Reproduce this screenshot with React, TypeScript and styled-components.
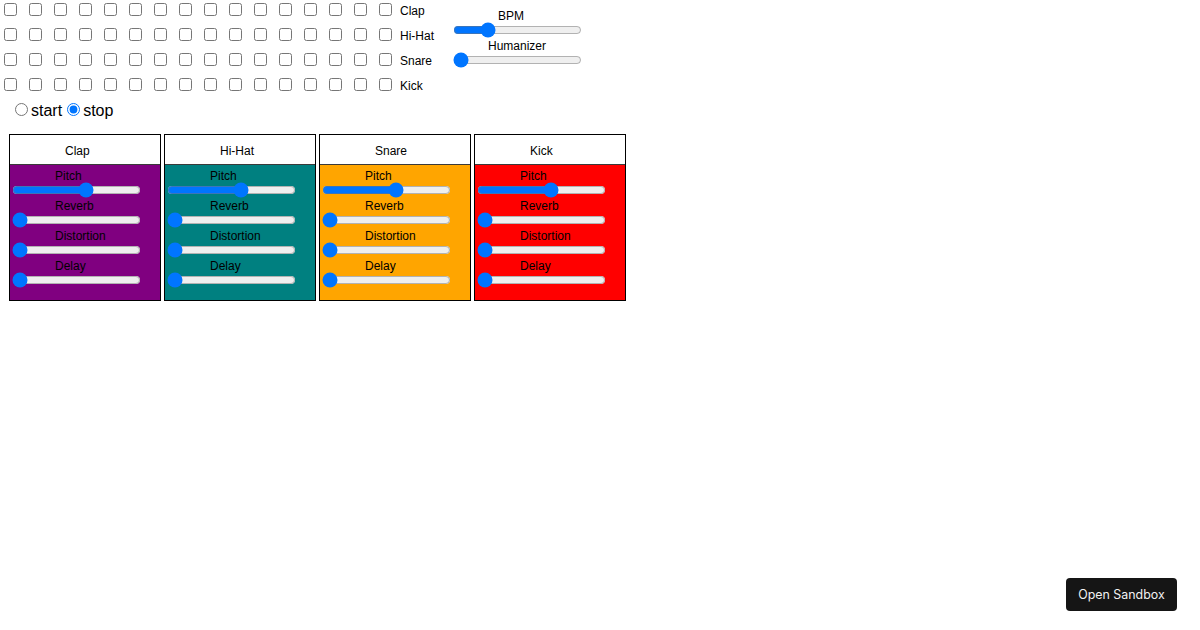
import React from "react";
import styled, { createGlobalStyle } from "styled-components";

const Global = createGlobalStyle`
  html, body {
    margin: 0;
    padding: 0;
    background: #ffffff;
    color: #000000;
    font-family: "Liberation Sans", Arial, sans-serif;
  }
`;

const Page = styled.div`
  display: flex;
  flex-direction: column;
`;

const Top = styled.div`
  display: flex;
  align-items: flex-start;
`;

const Sequencer = styled.div`
  display: flex;
  flex-direction: column;
`;

const SeqRow = styled.div`
  display: flex;
  align-items: flex-start;
  gap: 5px;
  height: 25px;
`;

const Step = styled.input.attrs({ type: "checkbox" })`
  width: 13px;
  height: 13px;
  margin: 3px 3px 3px 4px;
  flex: none;
`;

const TrackName = styled.span`
  margin-top: 4px;
  font-size: 12px;
  line-height: 14px;
`;

const Globals = styled.div`
  display: flex;
  flex-direction: column;
  margin-left: 17px;
  padding-top: 8px;
`;

const ControlLabel = styled.div<{ $indent: number }>`
  font-size: 12px;
  line-height: 12px;
  padding-top: 2px;
  padding-left: ${(p) => p.$indent}px;
  white-space: nowrap;
`;

const Slider = styled.input.attrs({ type: "range" })`
  display: block;
  width: 129px;
  height: 16px;
  margin: 0 2px;
`;

const Transport = styled.div`
  display: flex;
  align-items: flex-start;
  padding-left: 10px;
  margin-top: 2px;
  height: 18px;
  font-size: 16px;
  line-height: normal;
`;

const RadioLabel = styled.label`
  display: flex;
  align-items: flex-start;
`;

const Radio = styled.input.attrs({ type: "radio" })`
  width: 13px;
  height: 13px;
  margin: 1px 3px 0 5px;
  flex: none;
`;

const Cards = styled.div`
  display: flex;
  gap: 3px;
  padding-left: 9px;
  margin-top: 14px;
`;

const Card = styled.div`
  box-sizing: border-box;
  width: 152px;
  border: 1px solid #000000;
  display: flex;
  flex-direction: column;
`;

const CardHeader = styled.div`
  height: 26px;
  padding-top: 3px;
  line-height: 26px;
  font-size: 12px;
  padding-left: 55px;
  background: #ffffff;
  border-bottom: 1px solid #3a3a3a;
`;

const CardBody = styled.div<{ $bg: string }>`
  background: ${(p) => p.$bg};
  height: 135px;
  box-sizing: border-box;
  padding-top: 3px;
  display: flex;
  flex-direction: column;
`;

const SandboxButton = styled.button`
  position: fixed;
  right: 23px;
  bottom: 19px;
  width: 111px;
  height: 33px;
  border: none;
  border-radius: 4px;
  background: #151515;
  color: #f2f2f2;
  font-family: Inter, "Liberation Sans", sans-serif;
  font-size: 12.4px;
  padding: 0;
  cursor: pointer;
`;

const tracks = ["Clap", "Hi-Hat", "Snare", "Kick"];
const cardColors: Record<string, string> = {
  Clap: "#800080",
  "Hi-Hat": "#008080",
  Snare: "#ffa500",
  Kick: "#ff0000",
};
const effects = [
  { name: "Pitch", value: 58 },
  { name: "Reverb", value: 0 },
  { name: "Distortion", value: 0 },
  { name: "Delay", value: 0 },
];

export default function App() {
  return (
    <Page>
      <Global />
      <Top>
        <Sequencer>
          {tracks.map((t) => (
            <SeqRow key={t}>
              {Array.from({ length: 16 }).map((_, i) => (
                <Step key={i} />
              ))}
              <TrackName>{t}</TrackName>
            </SeqRow>
          ))}
        </Sequencer>
        <Globals>
          <ControlLabel $indent={47}>BPM</ControlLabel>
          <Slider min={0} max={100} defaultValue={24} />
          <ControlLabel $indent={37}>Humanizer</ControlLabel>
          <Slider min={0} max={100} defaultValue={0} />
        </Globals>
      </Top>
      <Transport>
        <RadioLabel>
          <Radio name="transport" />
          start
        </RadioLabel>
        <RadioLabel>
          <Radio name="transport" defaultChecked />
          stop
        </RadioLabel>
      </Transport>
      <Cards>
        {tracks.map((t) => (
          <Card key={t}>
            <CardHeader>{t}</CardHeader>
            <CardBody $bg={cardColors[t]}>
              {effects.map((e) => (
                <React.Fragment key={e.name}>
                  <ControlLabel $indent={45}>{e.name}</ControlLabel>
                  <Slider min={0} max={100} defaultValue={e.value} />
                </React.Fragment>
              ))}
            </CardBody>
          </Card>
        ))}
      </Cards>
      <SandboxButton>Open Sandbox</SandboxButton>
    </Page>
  );
}
